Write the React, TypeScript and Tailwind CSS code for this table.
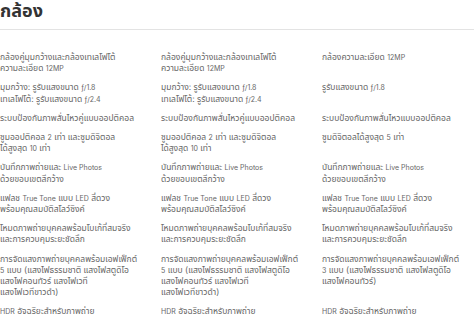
const ROWS: string[][][] = [
  [
    ["กล้องคู่มุมกว้างและกล้องเทเลโฟโต้", "ความละเอียด 12MP"],
    ["กล้องคู่มุมกว้างและกล้องเทเลโฟโต้", "ความละเอียด 12MP"],
    ["กล้องความละเอียด 12MP"],
  ],
  [
    ["มุมกว้าง: รูรับแสงขนาด ƒ/1.8", "เทเลโฟโต้: รูรับแสงขนาด ƒ/2.4"],
    ["มุมกว้าง: รูรับแสงขนาด ƒ/1.8", "เทเลโฟโต้: รูรับแสงขนาด ƒ/2.4"],
    ["รูรับแสงขนาด ƒ/1.8"],
  ],
  [
    ["ระบบป้องกันภาพสั่นไหวคู่แบบออปติคอล"],
    ["ระบบป้องกันภาพสั่นไหวคู่แบบออปติคอล"],
    ["ระบบป้องกันภาพสั่นไหวแบบออปติคอล"],
  ],
  [
    ["ซูมออปติคอล 2 เท่า และซูมดิจิตอล", "ได้สูงสุด 10 เท่า"],
    ["ซูมออปติคอล 2 เท่า และซูมดิจิตอล", "ได้สูงสุด 10 เท่า"],
    ["ซูมดิจิตอลได้สูงสุด 5 เท่า"],
  ],
  [
    ["บันทึกภาพถ่ายและ Live Photos", "ด้วยขอบเขตสีกว้าง"],
    ["บันทึกภาพถ่ายและ Live Photos", "ด้วยขอบเขตสีกว้าง"],
    ["บันทึกภาพถ่ายและ Live Photos", "ด้วยขอบเขตสีกว้าง"],
  ],
  [
    ["แฟลช True Tone แบบ LED สี่ดวง", "พร้อมคุณสมบัติสโลว์ซิงค์"],
    ["แฟลช True Tone แบบ LED สี่ดวง", "พร้อมคุณสมบัติสโลว์ซิงค์"],
    ["แฟลช True Tone แบบ LED สี่ดวง", "พร้อมคุณสมบัติสโลว์ซิงค์"],
  ],
  [
    ["โหมดภาพถ่ายบุคคลพร้อมโบเก้ที่สมจริง", "และการควบคุมระยะชัดลึก"],
    ["โหมดภาพถ่ายบุคคลพร้อมโบเก้ที่สมจริง", "และการควบคุมระยะชัดลึก"],
    ["โหมดภาพถ่ายบุคคลพร้อมโบเก้ที่สมจริง", "และการควบคุมระยะชัดลึก"],
  ],
  [
    [
      "การจัดแสงภาพถ่ายบุคคลพร้อมเอฟเฟ็กต์",
      "5 แบบ (แสงไฟธรรมชาติ แสงไฟสตูดิโอ",
      "แสงไฟคอนทัวร์ แสงไฟเวที",
      "แสงไฟเวทีขาวดำ)",
    ],
    [
      "การจัดแสงภาพถ่ายบุคคลพร้อมเอฟเฟ็กต์",
      "5 แบบ (แสงไฟธรรมชาติ แสงไฟสตูดิโอ",
      "แสงไฟคอนทัวร์ แสงไฟเวที",
      "แสงไฟเวทีขาวดำ)",
    ],
    [
      "การจัดแสงภาพถ่ายบุคคลพร้อมเอฟเฟ็กต์",
      "3 แบบ (แสงไฟธรรมชาติ แสงไฟสตูดิโอ",
      "แสงไฟคอนทัวร์)",
    ],
  ],
  [
    ["HDR อัจฉริยะสำหรับภาพถ่าย"],
    ["HDR อัจฉริยะสำหรับภาพถ่าย"],
    ["HDR อัจฉริยะสำหรับภาพถ่าย"],
  ],
];

// Latin runs render smaller than the Thai around them, as in the original font
const LATIN = /([A-Za-z0-9ƒ][A-Za-z0-9ƒ./ ]*[A-Za-z0-9ƒ]|[A-Za-z0-9ƒ])/;

function Line({ text }: { text: string }) {
  const parts = text.split(LATIN);
  return (
    <div className="whitespace-nowrap">
      {parts.map((p, i) =>
        i % 2 === 1 ? (
          <span key={i} className="text-[7px]">
            {p}
          </span>
        ) : (
          <span key={i}>{p}</span>
        )
      )}
    </div>
  );
}

export default function App() {
  return (
    <div
      className="h-[327px] w-[474px] overflow-hidden bg-white"
      style={{ fontFamily: 'Inter, "Noto Sans Thai", sans-serif' }}
    >
      {/* Section heading */}
      <div className="h-[30px] border-b border-[#e3e3e3]">
        <h2 className="text-[18px] font-bold leading-[22px] text-[#333]">กล้อง</h2>
      </div>

      {/* Comparison rows */}
      <div className="flex flex-col gap-[8px] pt-[22px]">
        {ROWS.map((row, i) => (
          <div key={i} className="grid grid-cols-[161px_161px_152px]">
            {row.map((lines, j) => (
              <div key={j} className="text-[8.5px] leading-[11.2px] text-[#666]">
                {lines.map((line, k) => (
                  <Line key={k} text={line} />
                ))}
              </div>
            ))}
          </div>
        ))}
      </div>
    </div>
  );
}
